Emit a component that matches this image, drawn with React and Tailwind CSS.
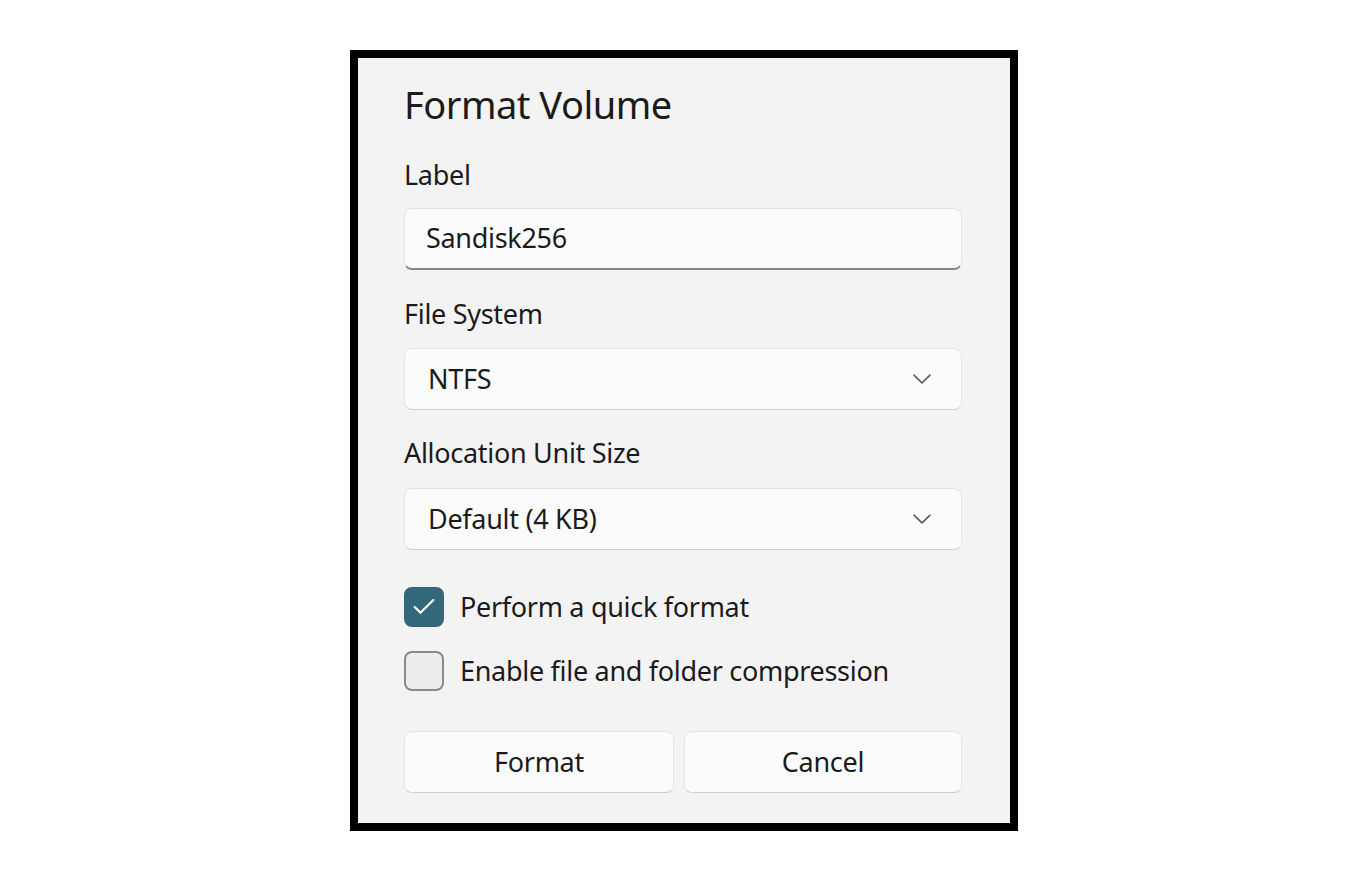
import { Check } from "lucide-react";

const font = { fontFamily: '"Noto Sans", "Open Sans", sans-serif' };

const Chevron = () => (
  <svg width="18" height="10" viewBox="0 0 18 10" fill="none" className="mr-[30px]">
    <path d="M1 1.2 L9 8.8 L17 1.2" stroke="#5c5c5c" strokeWidth="1.6" strokeLinecap="round" strokeLinejoin="round" />
  </svg>
);

const Select = ({ value, className }) => (
  <div
    className={
      "flex h-[62px] items-center justify-between rounded-lg border border-[#e5e5e5] border-b-[#cfcfcf] bg-[#fbfbfb] pl-[23px] text-[27px] tracking-[-0.3px] text-[#1b1b1b] " +
      className
    }
  >
    <span>{value}</span>
    <Chevron />
  </div>
);

export default function App() {
  return (
    <div className="flex h-[881px] w-full items-center justify-center bg-white" style={font}>
      <div className="flex h-[781px] w-[668px] flex-col border-8 border-black bg-[#f3f3f3] pl-[46px] pr-[48px] pt-[18px] text-[27px] tracking-[-0.3px] text-[#1b1b1b]">
        <h1 className="h-[56px] text-[38px] leading-[56px] font-normal tracking-[-0.5px]">Format Volume</h1>

        <label className="mt-[25px] h-9 leading-9">Label</label>
        <div className="mt-[15px] flex h-[62px] items-center rounded-lg border border-[#e5e5e5] border-b-2 border-b-[#868686] bg-[#fbfbfb] pl-[21px]">
          Sandisk256
        </div>

        <label className="mt-[26px] h-9 leading-9">File System</label>
        <Select value="NTFS" className="mt-[16px]" />

        <label className="mt-[25px] h-9 leading-9">Allocation Unit Size</label>
        <Select value="Default (4 KB)" className="mt-[17px]" />

        <div className="mt-[37px] flex h-10 items-center gap-[16px]">
          <div className="flex h-10 w-10 items-center justify-center rounded-lg bg-[#33687a]">
            <Check size={28} color="white" strokeWidth={1.8} />
          </div>
          <span>Perform a quick format</span>
        </div>

        <div className="mt-[24px] flex h-10 items-center gap-[16px]">
          <div className="h-10 w-10 rounded-lg border-2 border-[#8a8a8a] bg-[#ededed]" />
          <span>Enable file and folder compression</span>
        </div>

        <div className="mt-[40px] flex gap-[10px]">
          <button className="flex h-[62px] w-[270px] items-center justify-center rounded-lg border border-[#e5e5e5] border-b-[#cfcfcf] bg-[#fbfbfb]">
            Format
          </button>
          <button className="flex h-[62px] flex-1 items-center justify-center rounded-lg border border-[#e5e5e5] border-b-[#cfcfcf] bg-[#fbfbfb]">
            Cancel
          </button>
        </div>
      </div>
    </div>
  );
}
